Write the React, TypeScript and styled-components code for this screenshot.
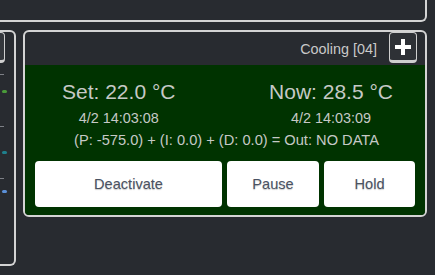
import styled, { createGlobalStyle } from "styled-components";

const GlobalStyle = createGlobalStyle`
  html, body {
    margin: 0;
    padding: 0;
    background: #282b30;
    font-family: "Liberation Sans", Arial, sans-serif;
    font-size: 14.4px;
    overflow: hidden;
  }
`;

const Page = styled.div`
  width: 435px;
  height: 275px;
  display: flex;
  flex-direction: column;
`;

const TopPanel = styled.div`
  width: 425px;
  height: 20px;
  border-bottom: 2px solid #d4d4d4;
  border-right: 2px solid #d4d4d4;
  border-bottom-right-radius: 6px;
`;

const Row = styled.div`
  display: flex;
  align-items: flex-start;
  gap: 7px;
  margin-top: 8px;
`;

const Sidebar = styled.div`
  width: 14px;
  height: 232px;
  border: 2px solid #d4d4d4;
  border-left: none;
  border-radius: 0 6px 6px 0;
  overflow: hidden;
  display: flex;
  flex-direction: column;
  align-items: flex-end;
`;

const SideButton = styled.div`
  flex: none;
  width: 28px;
  height: 27px;
  margin-right: 9px;
  border: 1px solid #cfcfcf;
  border-bottom-width: 3px;
  border-radius: 4px;
  background: #34373c;
`;

const SideItem = styled.div<{ $h: number }>`
  flex: none;
  width: 60px;
  height: ${(p) => p.$h}px;
  margin-right: 10px;
  display: flex;
  align-items: center;
  justify-content: flex-end;
`;

const Separator = styled.div`
  flex: none;
  width: 60px;
  height: 1px;
  margin-right: 10px;
  background: #7d8086;
`;

const Dot = styled.span<{ $color: string }>`
  width: 5px;
  height: 3px;
  margin-right: -3px;
  border-radius: 2px;
  background: ${(p) => p.$color};
`;

const Card = styled.div`
  width: 400px;
  border: 2px solid #d4d4d4;
  border-radius: 6px;
  overflow: hidden;
`;

const CardHeader = styled.div`
  height: 33px;
  display: flex;
  justify-content: flex-end;
  align-items: center;
  gap: 12px;
  padding-right: 8px;
`;

const Title = styled.span`
  color: #c9c9c9;
  font-size: 14.4px;
`;

const PlusButton = styled.button`
  width: 28px;
  height: 31px;
  padding: 0;
  margin-top: -2px;
  border: 1px solid #cfcfcf;
  border-bottom-width: 3px;
  border-radius: 4px;
  background: #2e3136;
  display: flex;
  align-items: center;
  justify-content: center;
`;

const CardBody = styled.div`
  background: #003300;
  padding: 15px 10px 8px;
  color: #c6c9c6;
`;

const Readings = styled.div`
  display: flex;
  justify-content: space-between;
  padding: 0 22px 0 27px;
`;

const Reading = styled.div`
  display: flex;
  flex-direction: column;
  align-items: center;
`;

const Value = styled.div`
  font-size: 21px;
  line-height: 24px;
`;

const Stamp = styled.div`
  font-size: 14.4px;
  line-height: 17px;
  margin-top: 6px;
`;

const Pid = styled.div`
  font-size: 14.65px;
  line-height: 17px;
  margin-top: 5px;
  text-align: center;
  padding-left: 3px;
`;

const Actions = styled.div`
  display: grid;
  grid-template-columns: 187fr 92fr 91fr;
  gap: 5px;
  margin-top: 12px;
`;

const ActionButton = styled.button`
  height: 46px;
  border: none;
  border-radius: 4px;
  background: #ffffff;
  color: #4a5262;
  font-family: "Liberation Sans", Arial, sans-serif;
  font-size: 14.6px;
  text-shadow: 0 1px 1px rgba(0, 0, 0, 0.22);
`;

const PlusIcon = () => (
  <svg width="16" height="16" viewBox="0 0 16 16">
    <rect x="6" y="0" width="4" height="16" fill="#fff" />
    <rect x="0" y="6" width="16" height="4" fill="#fff" />
  </svg>
);

export default function App() {
  return (
    <Page>
      <GlobalStyle />
      <TopPanel />
      <Row>
        <Sidebar>
          <SideButton />
          <SideItem $h={11} />
          <Separator />
          <SideItem $h={32}>
            <Dot $color="#4a9a3a" />
          </SideItem>
          <SideItem $h={19} />
          <Separator />
          <SideItem $h={51}>
            <Dot $color="#1f7f8c" />
          </SideItem>
          <Separator />
          <SideItem $h={24}>
            <Dot $color="#5b8fd6" />
          </SideItem>
        </Sidebar>
        <Card>
          <CardHeader>
            <Title>Cooling [04]</Title>
            <PlusButton>
              <PlusIcon />
            </PlusButton>
          </CardHeader>
          <CardBody>
            <Readings>
              <Reading>
                <Value>Set: 22.0 °C</Value>
                <Stamp>4/2 14:03:08</Stamp>
              </Reading>
              <Reading>
                <Value>Now: 28.5 °C</Value>
                <Stamp>4/2 14:03:09</Stamp>
              </Reading>
            </Readings>
            <Pid>(P: -575.0) + (I: 0.0) + (D: 0.0) = Out: NO DATA</Pid>
            <Actions>
              <ActionButton>Deactivate</ActionButton>
              <ActionButton>Pause</ActionButton>
              <ActionButton>Hold</ActionButton>
            </Actions>
          </CardBody>
        </Card>
      </Row>
    </Page>
  );
}
